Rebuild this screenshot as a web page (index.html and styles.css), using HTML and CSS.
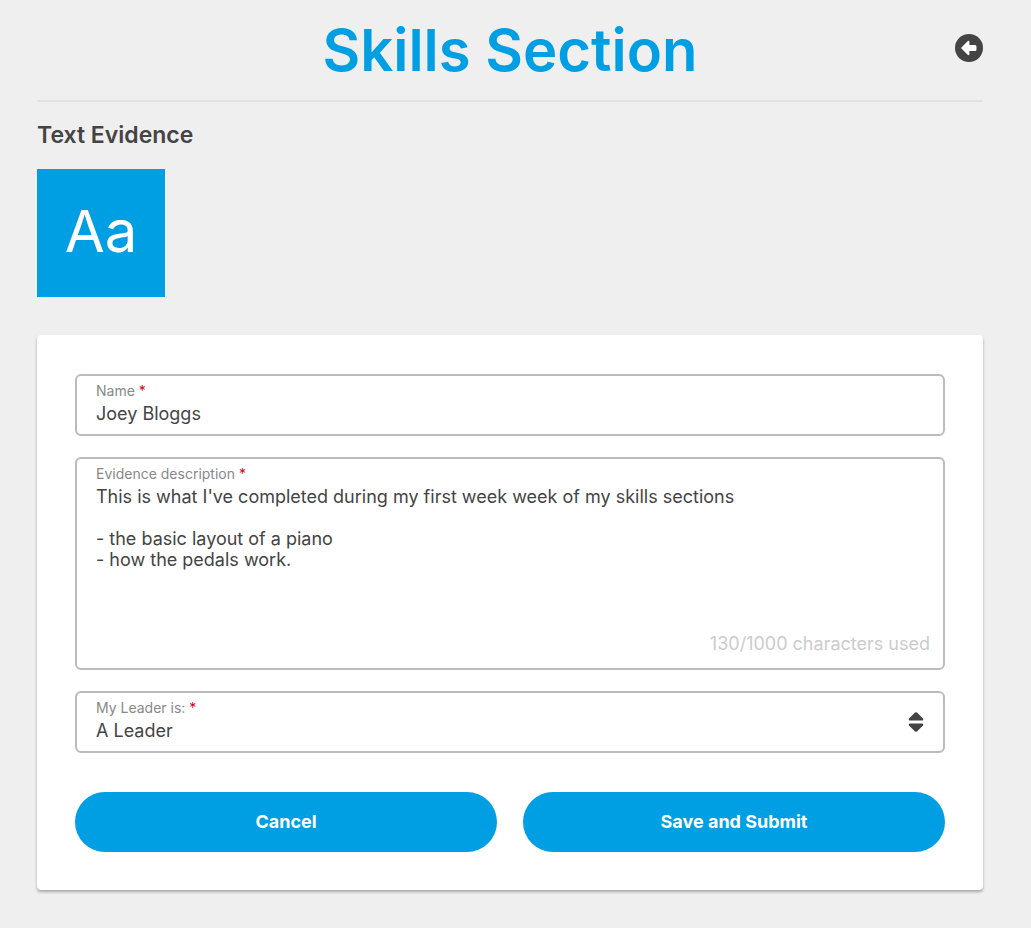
FILE: index.html
```html
<!DOCTYPE html>
<html lang="en">
<head>
  <meta charset="UTF-8">
  <meta name="viewport" content="width=device-width, initial-scale=1.0">
  <title>Skills Section</title>
  <link rel="stylesheet" href="styles.css">
</head>
<body>

<header class="page-header">
  <h1>Skills Section</h1>
  <a href="#" class="back-link" aria-label="Back">
    <svg viewBox="0 0 28 28" width="28" height="28">
      <circle cx="14" cy="14" r="14" fill="#444"/>
      <path d="M6 14 L12.6 7.2 Q14.4 6 14.4 8 V11 H20 Q21.5 11 21.5 12.5 V15.5 Q21.5 17 20 17 H14.4 V20 Q14.4 22 12.6 20.8 Z" fill="#fff"/>
    </svg>
  </a>
</header>

<main>
  <h2>Text Evidence</h2>
  <div class="type-tile">Aa</div>

  <form class="card">
    <div class="field">
      <label for="name">Name <span class="required">*</span></label>
      <input type="text" id="name" value="Joey Bloggs">
    </div>

    <div class="field">
      <label for="description">Evidence description <span class="required">*</span></label>
      <textarea id="description" rows="7" maxlength="1000">This is what I've completed during my first week week of my skills sections

- the basic layout of a piano
- how the pedals work.</textarea>
      <p class="counter">130/1000 characters used</p>
    </div>

    <div class="field">
      <label for="leader">My Leader is: <span class="required">*</span></label>
      <select id="leader">
        <option>A Leader</option>
      </select>
      <svg class="sort-icon" viewBox="0 0 16 20" width="16" height="20">
        <path d="M7 .6 Q8 -.2 9 .6 L15 6.6 Q15.8 8.4 14.2 8.6 H1.8 Q.2 8.4 1 6.6 Z" fill="#444"/>
        <path d="M7 19.4 Q8 20.2 9 19.4 L15 13.4 Q15.8 11.6 14.2 11.4 H1.8 Q.2 11.6 1 13.4 Z" fill="#444"/>
      </svg>
    </div>

    <div class="actions">
      <button type="button" class="btn">Cancel</button>
      <button type="submit" class="btn">Save and Submit</button>
    </div>
  </form>
</main>

</body>
</html>
```

FILE: styles.css
```css
* {
  margin: 0;
  padding: 0;
  box-sizing: border-box;
}

body {
  font-family: Inter, sans-serif;
  background: #efefef;
  color: #444;
  padding: 0 48px 38px 37px;
}

.page-header {
  display: grid;
  grid-template-columns: 28px 1fr 28px;
  align-items: center;
  padding: 1px 0 5px;
  border-bottom: 2px solid #e2e2e2;
  margin-bottom: 20px;
}

h1 {
  grid-column: 2;
  padding-top: 4px;
  font-size: 58px;
  font-weight: 600;
  line-height: 90px;
  text-align: center;
  color: #009fe3;
}

.back-link {
  height: 28px;
}

.back-link svg {
  display: block;
}

h2 {
  font-size: 23px;
  font-weight: 600;
  line-height: 27px;
  margin-bottom: 20px;
}

.type-tile {
  display: flex;
  align-items: center;
  justify-content: center;
  width: 128px;
  height: 128px;
  padding-bottom: 4px;
  margin-bottom: 38px;
  background: #009fe3;
  color: #fff;
  font-size: 58px;
}

.card {
  display: flex;
  flex-direction: column;
  gap: 21px;
  padding: 39px 38px 38px;
  background: #fff;
  border-radius: 4px;
  box-shadow: 0 2px 3px rgba(0, 0, 0, 0.3);
}

.field {
  position: relative;
  display: flex;
  flex-direction: column;
  padding: 6px 13px 10px 19px;
  border: 2px solid #bbb;
  border-radius: 6px;
}

.field label {
  margin-bottom: 3px;
  font-size: 14px;
  line-height: 18px;
  color: #888;
}

.required {
  color: #d0021b;
}

.field input,
.field textarea,
.field select {
  width: 100%;
  border: none;
  outline: none;
  background: transparent;
  font-family: inherit;
  font-size: 18px;
  line-height: 21px;
  color: #444;
}

.field input,
.field select {
  height: 21px;
}

.field textarea {
  display: block;
  resize: none;
}

.field select {
  appearance: none;
}

.counter {
  margin-bottom: 4px;
  font-size: 18px;
  line-height: 21px;
  text-align: right;
  color: #ccc;
}

/* sits over the right end of the select */
.sort-icon {
  position: absolute;
  top: 50%;
  right: 19px;
  transform: translateY(-50%);
  pointer-events: none;
}

.actions {
  display: flex;
  gap: 26px;
  margin-top: 18px;
}

.btn {
  flex: 1;
  height: 60px;
  padding-bottom: 2px;
  border: none;
  border-radius: 30px;
  background: #009fe3;
  color: #fff;
  font-family: inherit;
  font-size: 18px;
  font-weight: 700;
  cursor: pointer;
}

@media (max-width: 600px) {
  body {
    padding: 0 16px 24px;
  }

  h1 {
    font-size: 36px;
  }

  .card {
    padding: 20px;
  }

  .actions {
    flex-direction: column;
  }

  .btn {
    flex: none;
  }
}
```
